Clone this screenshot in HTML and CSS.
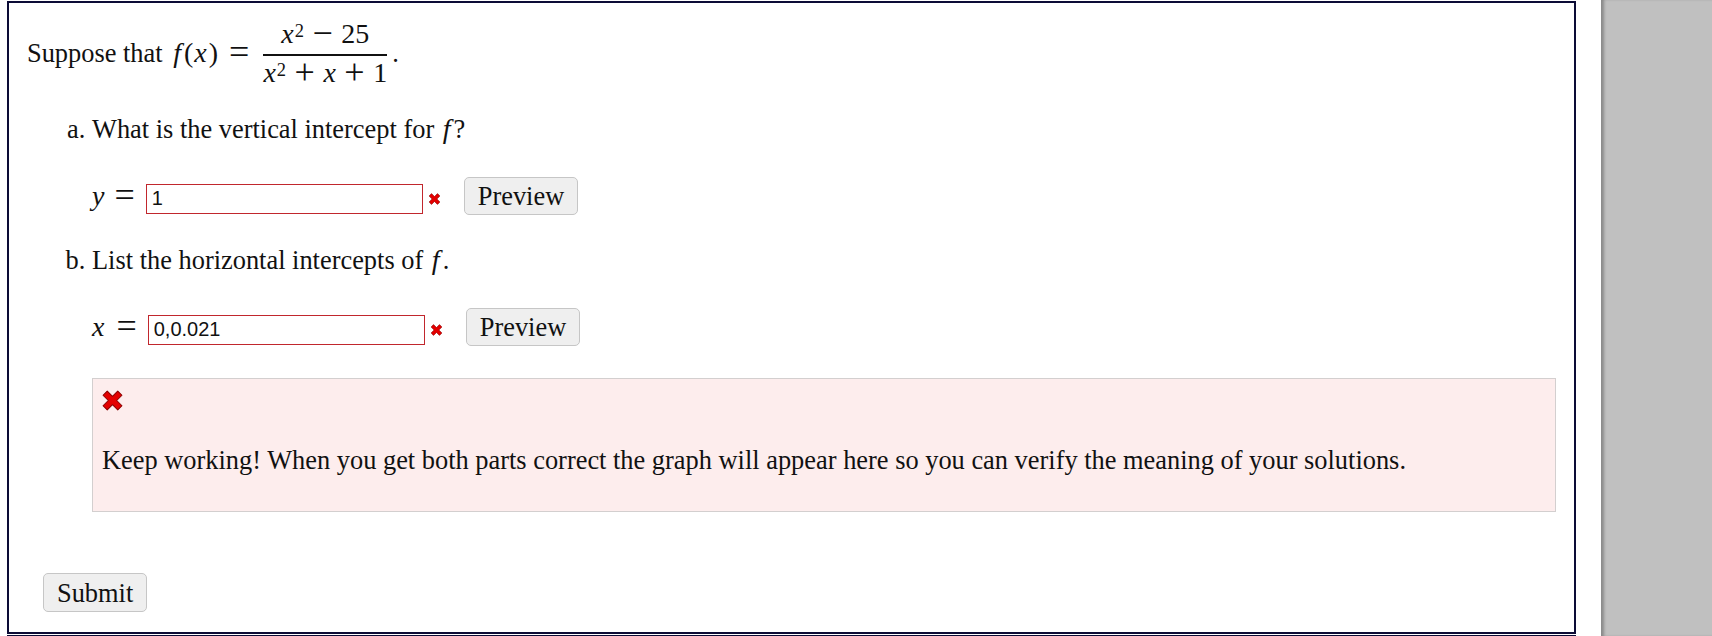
FILE: index.html
```html
<!DOCTYPE html>
<html lang="en">
<head>
  <meta charset="UTF-8">
  <title>Rational function intercepts</title>
  <link rel="stylesheet" href="styles.css">
</head>
<body>

  <div class="main">
    <form class="question-box">
      <p class="intro">Suppose that <span class="math lead"><i class="mi f">f</i><span class="mo">(</span><i class="mi arg">x</i><span class="mo">)</span><span class="rel">=</span><span class="frac"><span class="num"><i class="mi">x</i><sup>2</sup><span class="bin">−</span>25</span><span class="bar"></span><span class="den"><i class="mi">x</i><sup>2</sup><span class="bin">+</span><i class="mi">x</i><span class="bin">+</span>1</span></span></span>.</p>

      <div class="parts">
        <ol>
          <li>
            <p class="prompt">What is the vertical intercept for <span class="math"><i class="mi f">f</i></span>?</p>
            <div class="answer">
              <span class="math"><i class="mi">y</i><span class="rel">=</span></span>
              <input type="text" class="ans-input" value="1">
              <svg class="mark" viewBox="0 0 20 20"><polygon points="1,5 5,1 10,6 15,1 19,5 14,10 19,15 15,19 10,14 5,19 1,15 6,10"/></svg>
              <button type="button" class="btn">Preview</button>
            </div>
          </li>
          <li>
            <p class="prompt">List the horizontal intercepts of <span class="math"><i class="mi f">f</i></span>.</p>
            <div class="answer">
              <span class="math"><i class="mi wide">x</i><span class="rel">=</span></span>
              <input type="text" class="ans-input" value="0,0.021">
              <svg class="mark" viewBox="0 0 20 20"><polygon points="1,5 5,1 10,6 15,1 19,5 14,10 19,15 15,19 10,14 5,19 1,15 6,10"/></svg>
              <button type="button" class="btn">Preview</button>
            </div>
          </li>
        </ol>

        <div class="feedback">
          <svg class="mark-lg" viewBox="0 0 20 20"><polygon points="1,5 5,1 10,6 15,1 19,5 14,10 19,15 15,19 10,14 5,19 1,15 6,10"/></svg>
          <p>Keep working! When you get both parts correct the graph will appear here so you can verify the meaning of your solutions.</p>
        </div>
      </div>

      <button type="submit" class="btn submit">Submit</button>
    </form>
    <div class="next-box"></div>
  </div>

  <div class="side"></div>

</body>
</html>
```

FILE: styles.css
```css
html, body {
  height: 100%;
  margin: 0;
  padding: 0;
  overflow: hidden;
  background: #fff;
}

body {
  display: flex;
  font-family: "Liberation Serif", "Times New Roman", serif;
  font-size: 26.4px;
  line-height: 30px;
  color: #111;
}

.main {
  flex: 1;
  min-width: 0;
  padding: 1px 25px 0 7px;
}

.side {
  width: 111px;
  background: #c0c0c0;
  box-shadow: inset 4px 0 3px -1px #8a8a8a;
}

.question-box {
  border: 2px solid #0c0c36;
  padding: 0 18px 20px;
}

.next-box {
  margin-top: 1px;
  height: 10px;
  border-top: 2px solid #0c0c36;
}

/* math bits */
.math {
  font-size: 28px;
}

.mi {
  font-style: italic;
}

.mi.f {
  margin: 0 3px 0 2px;
}

.lead {
  margin-left: 2px;
}

.mi.arg {
  margin: 0 2px 0 1px;
}

.rel,
.bin {
  font-size: 36px;
  line-height: 0;
  vertical-align: -2px;
}

.rel {
  margin: 0 13px 0 11px;
}

.bin {
  margin: 0 8.5px;
}

sup {
  font-size: 0.66em;
  line-height: 0;
  vertical-align: 0.32em;
  margin-left: 1px;
}

.frac {
  display: inline-flex;
  flex-direction: column;
  vertical-align: 19px;
  text-align: center;
  padding: 0 1px;
  margin-right: 4px;
}

.num {
  line-height: 31px;
  padding-bottom: 5px;
}

.bar {
  height: 2px;
  background: #111;
}

.den {
  line-height: 31px;
  padding-top: 1px;
}

.intro {
  margin: 15px 0 0;
}

/* parts a, b */
.parts {
  padding-left: 65px;
}

.parts ol {
  margin: 26px 0 0;
  padding: 0;
  list-style: lower-alpha;
}

.parts li + li {
  margin-top: 30px;
}

.prompt {
  margin: 0;
}

.answer {
  display: flex;
  align-items: baseline;
  margin-top: 33px;
}

.answer .mi {
  margin-right: 2px;
}

.answer .mi.wide {
  margin-right: 4px;
}

.answer .rel {
  margin: 0 11px 0 8px;
}

.ans-input {
  box-sizing: border-box;
  width: 277px;
  height: 30px;
  padding: 2px 5px;
  border: 1px solid #c1272d;
  font: 20px/24px "Liberation Sans", Arial, sans-serif;
  color: #111;
}

.mark {
  width: 13px;
  height: 12px;
  margin: 0 23px 0 5px;
}

.mark polygon,
.mark-lg polygon {
  fill: #e40000;
  stroke: #8a0000;
  stroke-width: 1;
  stroke-linejoin: round;
}

.btn {
  box-sizing: border-box;
  height: 38px;
  padding: 3px 13px;
  border: 1px solid #c6c6c6;
  border-radius: 5px;
  background: #efefef;
  font: 26.4px/30px "Liberation Serif", "Times New Roman", serif;
  color: #111;
}

.submit {
  display: block;
  height: 39px;
  margin: 61px 0 0 16px;
}

/* feedback */
.feedback {
  margin-top: 32px;
  padding: 10px 10px 10px 9px;
  border: 1px solid #d3cfcf;
  background: #fdeded;
}

.mark-lg {
  display: block;
  width: 21px;
  height: 23px;
}

.feedback p {
  margin: 33px 0 26px;
}
```
